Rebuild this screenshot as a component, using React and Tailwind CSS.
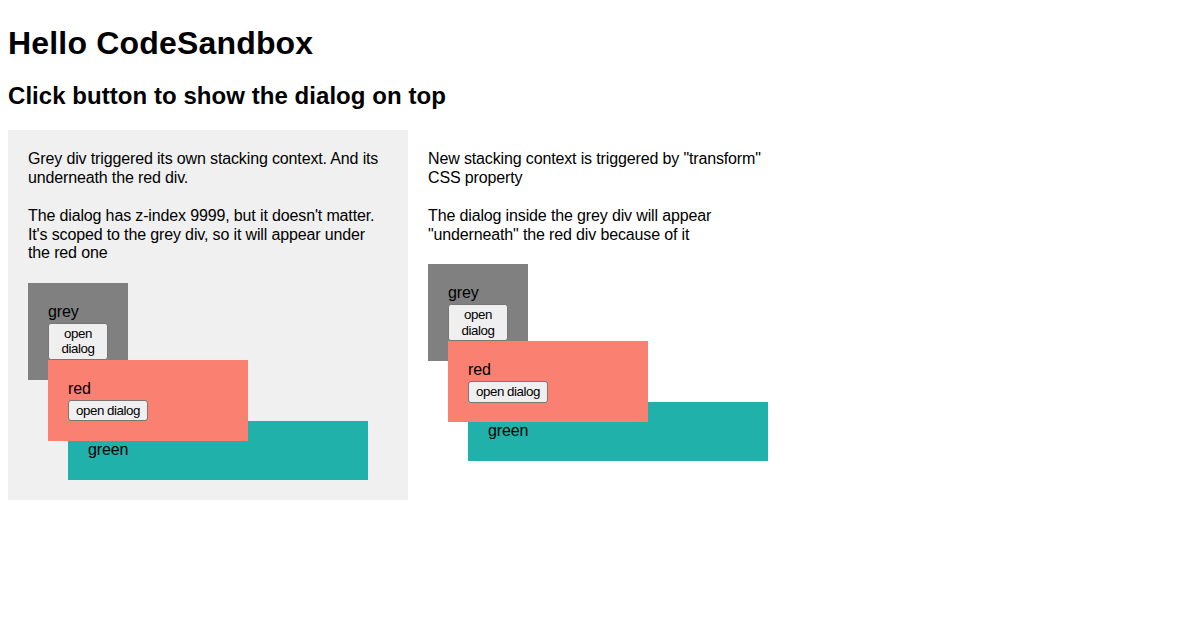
import React from 'react';

function DialogButton() {
  return (
    <button className="block bg-[#efefef] border border-[#767676] rounded-[3px] px-[7px] py-[2px] text-[13.333px] leading-[15.33px] tracking-[-0.45px] text-black text-center">
      open dialog
    </button>
  );
}

function Stack() {
  return (
    <div>
      <div className="w-[100px] h-[97px] p-5 bg-[#808080]">
        <div className="leading-[18.4px] tracking-[-0.14px]">grey</div>
        <div className="mt-[1.5px]">
          <DialogButton />
        </div>
      </div>
      <div className="relative z-10 w-[200px] h-[81px] p-5 -mt-5 ml-5 bg-[#fa8072]">
        <div className="leading-[18.4px] tracking-[-0.14px]">red</div>
        <div className="mt-[1.5px]">
          <DialogButton />
        </div>
      </div>
      <div className="relative w-[300px] h-[59px] p-5 -mt-5 ml-10 bg-[#20b2aa]">
        <div className="leading-[18.4px] tracking-[-0.14px]">green</div>
      </div>
    </div>
  );
}

export default function App() {
  return (
    <div className="px-2 font-['Liberation_Sans',Arial,sans-serif] text-black bg-white min-h-[630px]">
      <h1 className="pt-[24.5px] text-[32px] font-bold leading-[36.8px] tracking-[0.18px]">Hello CodeSandbox</h1>
      <h2 className="mt-[21.2px] text-[24px] font-bold leading-[27.6px] tracking-[0.05px]">Click button to show the dialog on top</h2>

      <div className="flex mt-[19.9px]">
        <div className="w-[400px] p-5 bg-[#f0f0f0]">
          <p className="text-base leading-[18.6px] tracking-[-0.14px]">
            Grey div triggered its own stacking context. And its underneath the red div.
          </p>
          <p className="mt-5 text-base leading-[18.6px] tracking-[-0.14px]">
            The dialog has z-index 9999, but it doesn't matter. It's scoped to the grey div, so it will appear under the red one
          </p>
          <div className="mt-5">
            <Stack />
          </div>
        </div>

        <div className="w-[400px] p-5">
          <p className="text-base leading-[18.6px] tracking-[-0.14px]">
            New stacking context is triggered by "transform" CSS property
          </p>
          <p className="mt-5 text-base leading-[18.6px] tracking-[-0.14px]">
            The dialog inside the grey div will appear "underneath" the red div because of it
          </p>
          <div className="mt-5">
            <Stack />
          </div>
        </div>
      </div>
    </div>
  );
}
